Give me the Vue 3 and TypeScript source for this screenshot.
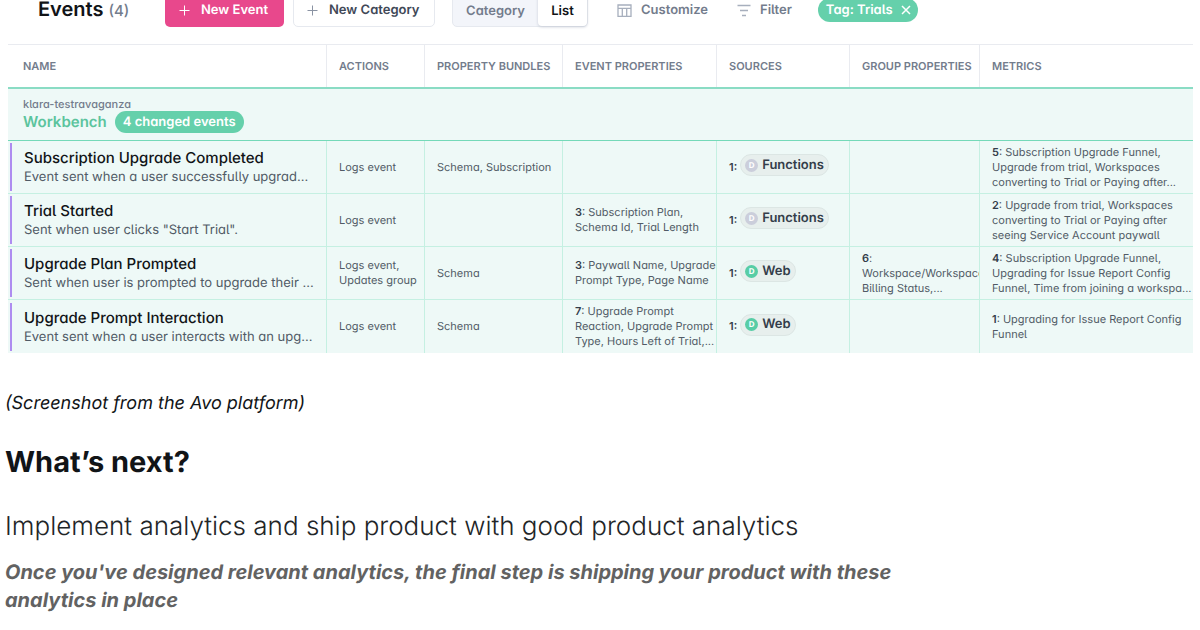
<script setup lang="ts">
interface Listing {
  count?: string
  lines: string[]
}

interface EventRow {
  name: string
  description: string
  actions: Listing
  bundles: Listing
  properties: Listing
  source: { name: string; active: boolean }
  groups: Listing
  metrics: Listing
}

const none: Listing = { lines: [] }

const columns: { key: string; label: string }[] = [
  { key: 'name', label: 'Name' },
  { key: 'actions', label: 'Actions' },
  { key: 'bundles', label: 'Property bundles' },
  { key: 'properties', label: 'Event properties' },
  { key: 'sources', label: 'Sources' },
  { key: 'groups', label: 'Group properties' },
  { key: 'metrics', label: 'Metrics' },
]

const before = ['actions', 'bundles', 'properties'] as const
const after = ['groups', 'metrics'] as const

const events: EventRow[] = [
  {
    name: 'Subscription Upgrade Completed',
    description: 'Event sent when a user successfully upgrad...',
    actions: { lines: ['Logs event'] },
    bundles: { lines: ['Schema, Subscription'] },
    properties: none,
    source: { name: 'Functions', active: false },
    groups: none,
    metrics: {
      count: '5',
      lines: ['Subscription Upgrade Funnel,', 'Upgrade from trial, Workspaces', 'converting to Trial or Paying after...'],
    },
  },
  {
    name: 'Trial Started',
    description: 'Sent when user clicks "Start Trial".',
    actions: { lines: ['Logs event'] },
    bundles: none,
    properties: { count: '3', lines: ['Subscription Plan,', 'Schema Id, Trial Length'] },
    source: { name: 'Functions', active: false },
    groups: none,
    metrics: {
      count: '2',
      lines: ['Upgrade from trial, Workspaces', 'converting to Trial or Paying after', 'seeing Service Account paywall'],
    },
  },
  {
    name: 'Upgrade Plan Prompted',
    description: 'Sent when user is prompted to upgrade their ...',
    actions: { lines: ['Logs event,', 'Updates group'] },
    bundles: { lines: ['Schema'] },
    properties: { count: '3', lines: ['Paywall Name, Upgrade', 'Prompt Type, Page Name'] },
    source: { name: 'Web', active: true },
    groups: { count: '6', lines: ['', 'Workspace/Workspace', 'Billing Status,...'] },
    metrics: {
      count: '4',
      lines: ['Subscription Upgrade Funnel,', 'Upgrading for Issue Report Config', 'Funnel, Time from joining a workspa...'],
    },
  },
  {
    name: 'Upgrade Prompt Interaction',
    description: 'Event sent when a user interacts with an upg...',
    actions: { lines: ['Logs event'] },
    bundles: { lines: ['Schema'] },
    properties: { count: '7', lines: ['Upgrade Prompt', 'Reaction, Upgrade Prompt', 'Type, Hours Left of Trial,...'] },
    source: { name: 'Web', active: true },
    groups: none,
    metrics: { count: '1', lines: ['Upgrading for Issue Report Config', 'Funnel'] },
  },
]
</script>

<template>
  <main class="page">
    <section class="platform">
      <header class="toolbar">
        <h1 class="heading">Events <span class="total">(4)</span></h1>
        <button type="button" class="btn primary">
          <svg class="plus" viewBox="0 0 11 11" aria-hidden="true"><path d="M5.500 0.500V10.500M0.500 5.500H10.500" /></svg>
          New Event
        </button>
        <button type="button" class="btn outline">
          <svg class="plus" viewBox="0 0 11 11" aria-hidden="true"><path d="M5.500 0.500V10.500M0.500 5.500H10.500" /></svg>
          New Category
        </button>
        <div class="switcher">
          <button type="button" class="option">Category</button>
          <button type="button" class="option selected">List</button>
        </div>
        <button type="button" class="tool">
          <svg class="grid-icon" viewBox="0 0 15 13" aria-hidden="true">
            <path d="M1 1H14V12.300H1ZM1 4.300H14M5.300 4.300V12M9.700 4.300V12" />
          </svg>
          Customize
        </button>
        <button type="button" class="tool">
          <svg class="filter-icon" viewBox="0 0 14 13" aria-hidden="true">
            <path d="M0.500 1.500H13.500M3 6.500H11M5 11.500H9" />
          </svg>
          Filter
        </button>
        <button type="button" class="tag">
          Tag: Trials
          <svg class="close" viewBox="0 0 10 10" aria-hidden="true"><path d="M1 1L9 9M9 1L1 9" /></svg>
        </button>
      </header>

      <table class="events">
        <colgroup>
          <col v-for="column in columns" :key="column.key" :class="`col-${column.key}`" />
        </colgroup>
        <thead>
          <tr>
            <th v-for="column in columns" :key="column.key" scope="col">{{ column.label }}</th>
          </tr>
        </thead>
        <tbody>
          <tr class="group">
            <td :colspan="columns.length">
              <div class="owner">klara-testravaganza</div>
              <div class="workbench">
                <span class="workbench-name">Workbench</span>
                <span class="changed">4 changed events</span>
              </div>
            </td>
          </tr>
          <tr v-for="event in events" :key="event.name" class="event">
            <td class="name-cell">
              <div class="name-wrap">
                <div class="event-name">{{ event.name }}</div>
                <div class="event-description">{{ event.description }}</div>
              </div>
            </td>
            <td v-for="key in before" :key="key">
              <div v-for="(line, i) in event[key].lines" :key="i">
                <template v-if="i === 0 && event[key].count"><b>{{ event[key].count }}</b>: </template>{{ line }}
              </div>
            </td>
            <td>
              <div class="source">
                <b class="source-count">1:</b>
                <span class="pill">
                  <span class="dot" :class="{ active: event.source.active }">D</span>
                  {{ event.source.name }}
                </span>
              </div>
            </td>
            <td v-for="key in after" :key="key">
              <div v-for="(line, i) in event[key].lines" :key="i">
                <template v-if="i === 0 && event[key].count"><b>{{ event[key].count }}</b>: </template>{{ line }}
              </div>
            </td>
          </tr>
        </tbody>
      </table>
    </section>

    <article class="article">
      <p class="caption">(Screenshot from the Avo platform)</p>
      <h2 class="next">What’s next?</h2>
      <h3 class="step">Implement analytics and ship product with good product analytics</h3>
      <p class="summary">Once you've designed relevant analytics, the final step is shipping your product with these analytics in place</p>
    </article>
  </main>
</template>

<style>
body {
  margin: 0;
  background: #fff;
}
</style>

<style scoped>
.page {
  font-family: Inter, "Liberation Sans", sans-serif;
  color: #111417;
  text-rendering: geometricPrecision;
}

.platform {
  margin: 0 7px 0 8px;
  font-feature-settings: "cv11", "cv05";
}

.toolbar {
  display: flex;
  align-items: center;
  height: 34px;
  margin-top: -7px;
  padding: 0 0 17px 30px;
  white-space: nowrap;
}

.heading {
  width: 127px;
  margin: 0;
  font-size: 20px;
  line-height: 28px;
  font-weight: 600;
  font-feature-settings: normal;
}

.total {
  color: #737c8c;
  font-size: 15px;
  font-weight: 500;
}

button {
  font: inherit;
  font-feature-settings: inherit;
  text-rendering: inherit;
  border: 0;
  margin: 0;
  padding: 0;
  background: none;
  cursor: pointer;
}

.btn {
  display: flex;
  align-items: center;
  gap: 11px;
  height: 34px;
  box-sizing: border-box;
  border-radius: 5px;
  font-size: 13px;
  font-weight: 600;
}

.primary {
  width: 119px;
  padding-left: 14px;
  background: #e8488c;
  color: #fff;
}

.outline {
  width: 142px;
  margin-left: 9px;
  padding-left: 13px;
  border: 1px solid #e6e9ef;
  color: #3f4857;
}

svg {
  fill: none;
  stroke: currentColor;
  flex: none;
}

.plus {
  width: 11px;
  height: 11px;
}

.outline .plus {
  color: #8a93a3;
}

.switcher {
  display: flex;
  width: 136px;
  height: 34px;
  box-sizing: border-box;
  margin-left: 17px;
  border: 1px solid #e6e9ef;
  border-radius: 5px;
  background: #f3f5fa;
  font-size: 13px;
}

.option {
  flex: 1 1 auto;
  padding-top: 2px;
  color: #737c8c;
  font-weight: 600;
}

.option.selected {
  flex: 0 0 49px;
  border-radius: 4px;
  background: #fff;
  box-shadow: 0 1px 3px #c9ced8;
  color: #111417;
}

.tool {
  display: flex;
  align-items: center;
  gap: 9px;
  margin-left: 29px;
  color: #737c8c;
  font-size: 13px;
  font-weight: 600;
}

.tool svg {
  color: #a7afbd;
  stroke-width: 1.3;
}

.grid-icon {
  width: 15px;
  height: 13px;
}

.filter-icon {
  width: 14px;
  height: 13px;
}

.tag {
  display: flex;
  align-items: center;
  gap: 8px;
  height: 24px;
  margin-left: 26px;
  padding: 0 7px 0 8px;
  border-radius: 12px;
  background: #65d0ab;
  color: #fff;
  font-size: 13px;
  font-weight: 600;
}

.close {
  width: 10px;
  height: 10px;
  stroke-width: 1.5;
}

.events {
  width: 100%;
  table-layout: fixed;
  border-collapse: separate;
  border-spacing: 0;
}

.col-name { width: 319px; }
.col-actions { width: 98px; }
.col-bundles { width: 138px; }
.col-properties { width: 154px; }
.col-sources { width: 133px; }
.col-groups { width: 130px; }

th {
  height: 43px;
  box-sizing: border-box;
  padding: 0 0 1px 12px;
  border-top: 1px solid #e9ebf0;
  border-right: 1px solid #e9ebf0;
  color: #737c8c;
  font-size: 11px;
  font-weight: 600;
  text-align: left;
  text-transform: uppercase;
  white-space: nowrap;
}

th:first-child {
  padding-left: 15px;
}

th:last-child,
td:last-child {
  border-right: 0;
}

td {
  height: 53px;
  box-sizing: border-box;
  padding: 0 0 0 12px;
  border-right: 1px solid #c5f0e2;
  border-bottom: 1px solid #c5f0e2;
  background: #eef9f7;
  color: #515b66;
  font-size: 11px;
  line-height: 15px;
  white-space: nowrap;
  overflow: hidden;
}

tr:last-child td {
  border-bottom: 0;
}

td b {
  color: #343d4a;
  font-weight: 600;
}

.group td {
  height: 54px;
  padding: 0 0 0 15px;
  border-top: 2px solid #8adcc4;
  border-bottom: 1px solid #75d9b9;
}

.owner {
  color: #737c8c;
  font-weight: 500;
  line-height: 14px;
}

.workbench {
  display: flex;
  align-items: center;
  gap: 8px;
  height: 22px;
}

.workbench-name {
  color: #5bc49d;
  font-size: 15px;
  font-weight: 600;
}

.changed {
  padding: 0 8px;
  border-radius: 11px;
  background: #65d0ab;
  color: #fff;
  font-size: 13px;
  font-weight: 600;
  line-height: 22px;
}

.event .name-cell {
  padding: 0 0 0 2px;
}

.name-wrap {
  display: flex;
  flex-direction: column;
  justify-content: center;
  box-sizing: border-box;
  height: 48px;
  padding: 1px 0 0 12px;
  border-left: 2px solid #ae8cf0;
}

.event-name {
  color: #111417;
  font-size: 15px;
  font-weight: 500;
  line-height: 20px;
}

.event-description {
  color: #515b66;
  font-size: 13px;
  line-height: 19px;
}

.source {
  display: flex;
  align-items: center;
  gap: 3px;
  padding-bottom: 4px;
}

.source-count {
  padding-top: 4px;
}

.pill {
  display: flex;
  align-items: center;
  gap: 4px;
  height: 22px;
  box-sizing: border-box;
  padding: 0 4px;
  border: 1px solid #dce6e4;
  border-radius: 11px;
  background: #e7efed;
  color: #343d4a;
  font-size: 13px;
  font-weight: 600;
}

.dot {
  width: 13px;
  height: 13px;
  border-radius: 50%;
  background: #cbcedb;
  color: #fff;
  font-size: 8px;
  font-weight: 700;
  line-height: 13px;
  text-align: center;
}

.dot.active {
  background: #58cda6;
}

.article {
  padding: 37px 5px 0;
}

.caption {
  margin: 0;
  font-size: 18px;
  line-height: 28px;
  font-style: italic;
}

.next {
  margin: 24px 0 0;
  font-size: 29px;
  line-height: 40px;
  font-weight: 700;
}

.step {
  margin: 27px 0 0;
  color: #222527;
  font-size: 26px;
  line-height: 36px;
  font-weight: 300;
}

.summary {
  max-width: 920px;
  margin: 13px 0 0;
  color: #626262;
  font-size: 20px;
  line-height: 28px;
  font-style: italic;
  font-weight: 700;
}
</style>
